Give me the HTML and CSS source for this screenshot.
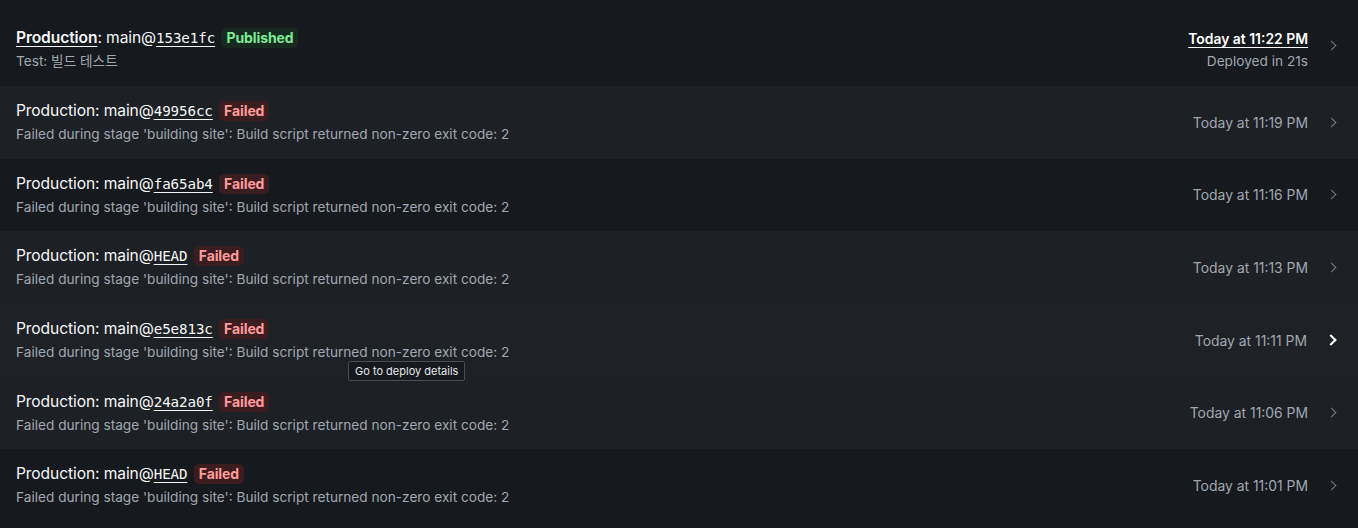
FILE: index.html
```html
<!DOCTYPE html>
<html lang="en">
<head>
  <meta charset="UTF-8">
  <meta name="viewport" content="width=device-width, initial-scale=1.0">
  <title>Deploys</title>
  <link rel="stylesheet" href="styles.css">
</head>
<body>
  <ul class="deploys">
    <li class="deploy deploy-first">
      <div class="deploy-main">
        <div class="deploy-title"><a class="ctx" href="#">Production</a>: main@<a class="hash" href="#">153e1fc</a> <span class="badge badge-ok">Published</span></div>
        <div class="deploy-sub">Test: 빌드 테스트</div>
      </div>
      <div class="deploy-meta">
        <a class="time time-strong" href="#">Today at 11:22 PM</a>
        <div class="deploy-sub">Deployed in 21s</div>
      </div>
      <span class="chev"></span>
    </li>
    <li class="deploy">
      <div class="deploy-main">
        <div class="deploy-title">Production: main@<a class="hash" href="#">49956cc</a> <span class="badge badge-fail">Failed</span></div>
        <div class="deploy-sub">Failed during stage 'building site': Build script returned non-zero exit code: 2</div>
      </div>
      <div class="deploy-meta"><span class="time">Today at 11:19 PM</span></div>
      <span class="chev"></span>
    </li>
    <li class="deploy">
      <div class="deploy-main">
        <div class="deploy-title">Production: main@<a class="hash" href="#">fa65ab4</a> <span class="badge badge-fail">Failed</span></div>
        <div class="deploy-sub">Failed during stage 'building site': Build script returned non-zero exit code: 2</div>
      </div>
      <div class="deploy-meta"><span class="time">Today at 11:16 PM</span></div>
      <span class="chev"></span>
    </li>
    <li class="deploy">
      <div class="deploy-main">
        <div class="deploy-title">Production: main@<a class="hash" href="#">HEAD</a> <span class="badge badge-fail">Failed</span></div>
        <div class="deploy-sub">Failed during stage 'building site': Build script returned non-zero exit code: 2</div>
      </div>
      <div class="deploy-meta"><span class="time">Today at 11:13 PM</span></div>
      <span class="chev"></span>
    </li>
    <li class="deploy deploy-hover">
      <div class="deploy-main">
        <div class="deploy-title">Production: main@<a class="hash" href="#">e5e813c</a> <span class="badge badge-fail">Failed</span></div>
        <div class="deploy-sub">Failed during stage 'building site': Build script returned non-zero exit code: 2</div>
        <span class="tooltip">Go to deploy details</span>
      </div>
      <div class="deploy-meta"><span class="time">Today at 11:11 PM</span></div>
      <span class="chev"></span>
    </li>
    <li class="deploy">
      <div class="deploy-main">
        <div class="deploy-title">Production: main@<a class="hash" href="#">24a2a0f</a> <span class="badge badge-fail">Failed</span></div>
        <div class="deploy-sub">Failed during stage 'building site': Build script returned non-zero exit code: 2</div>
      </div>
      <div class="deploy-meta"><span class="time">Today at 11:06 PM</span></div>
      <span class="chev"></span>
    </li>
    <li class="deploy">
      <div class="deploy-main">
        <div class="deploy-title">Production: main@<a class="hash" href="#">HEAD</a> <span class="badge badge-fail">Failed</span></div>
        <div class="deploy-sub">Failed during stage 'building site': Build script returned non-zero exit code: 2</div>
      </div>
      <div class="deploy-meta"><span class="time">Today at 11:01 PM</span></div>
      <span class="chev"></span>
    </li>
  </ul>
</body>
</html>
```

FILE: styles.css
```css
body {
  margin: 0;
  background-color: #16191d;
  color: #f5f6f7;
  font-family: Inter, "Noto Sans CJK KR", sans-serif;
  overflow: hidden;
}

a {
  color: inherit;
}

.deploys {
  list-style: none;
  margin: 0;
  padding: 0;
}

.deploy {
  display: flex;
  align-items: center;
  height: 72.6px;
  padding: 0 20px 0 16px;
  box-sizing: border-box;
}

/* 奇偶行背景交替 */
.deploy:nth-child(odd) {
  background-color: #16191d;
}

.deploy:nth-child(even) {
  background-color: #1d2025;
}

.deploy-first {
  height: 86px;
  padding-top: 12px;
}

.deploy-hover,
.deploy:nth-child(odd).deploy-hover {
  background-color: #1e2126;
}

.deploy-main {
  position: relative;
  flex: 1;
  min-width: 0;
}

.deploy-title {
  font-size: 15.6px;
  line-height: 22px;
  letter-spacing: -0.1px;
}

.ctx {
  font-weight: 600;
  text-underline-offset: 3px;
}

.hash {
  font-family: "DejaVu Sans Mono", monospace;
  font-size: 14.2px;
  text-underline-offset: 3px;
}

.badge {
  display: inline-block;
  margin-left: 2px;
  padding: 0 5px;
  border-radius: 5px;
  font-size: 14px;
  font-weight: 700;
  line-height: 20px;
}

.badge-ok {
  color: #7ceb97;
  background-color: #182a1f;
}

.badge-fail {
  color: #ff9b9b;
  background-color: #3b1d20;
}

.deploy-sub {
  margin-top: 2px;
  font-size: 13.65px;
  line-height: 20px;
  color: #a1a7b0;
}

.deploy-meta {
  text-align: right;
  margin-right: 20px;
}

.time {
  font-size: 13.9px;
  line-height: 20px;
  color: #a1a7b0;
}

.time-strong {
  color: #fff;
  font-weight: 600;
  text-underline-offset: 3px;
}

.chev {
  width: 6px;
  height: 6px;
  border-top: 1.5px solid #7a8088;
  border-right: 1.5px solid #7a8088;
  transform: rotate(45deg);
  margin-right: 3px;
}

.deploy-first .chev {
  margin-top: -8px;
}

.deploy-hover .chev {
  border-color: #fff;
  border-width: 2px;
}

.tooltip {
  position: absolute;
  left: 332px;
  top: 43px;
  padding: 2px 6px;
  font-size: 11px;
  line-height: 14px;
  color: #e6e8ea;
  background-color: #16191d;
  border: 1px solid #4a4e54;
  border-radius: 2px;
  white-space: nowrap;
}
```
